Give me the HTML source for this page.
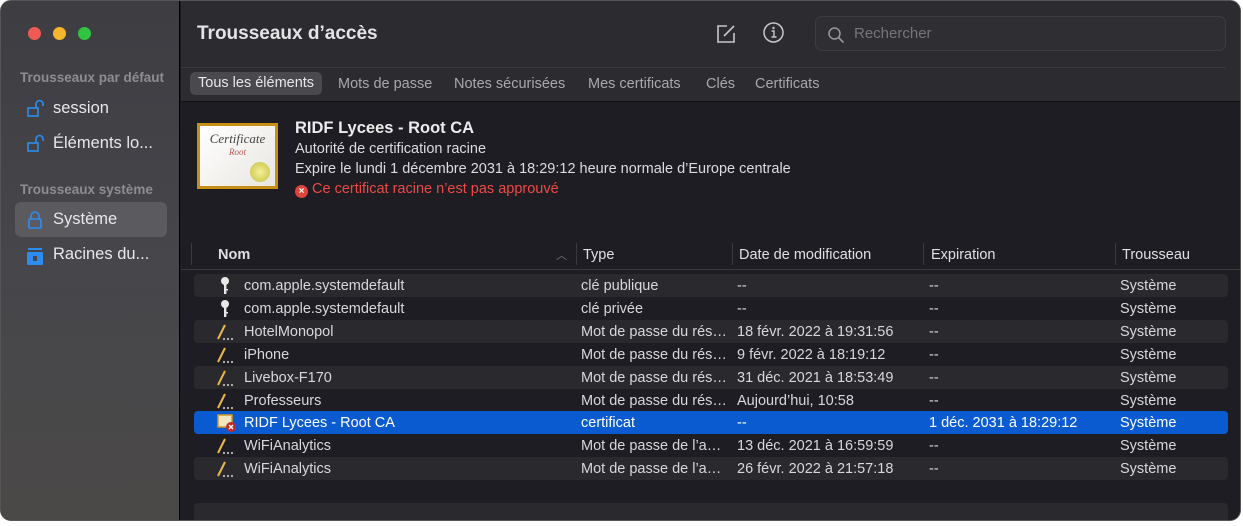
<!DOCTYPE html>
<html><head><meta charset="utf-8"><style>
*{margin:0;padding:0;box-sizing:border-box}
body{width:1243px;height:526px;background:#fff;font-family:"Liberation Sans",sans-serif;overflow:hidden;position:relative}
.win{position:absolute;left:0;top:0;width:1241px;height:521px;border-radius:11px;overflow:hidden;background:#1e1d23;border:1px solid #555}
.side{position:absolute;left:0;top:0;width:179px;height:100%;background:linear-gradient(180deg,#3d3d42 0%,#46464b 50%,#4b4948 100%);border-right:1px solid #000}
.dot{position:absolute;top:26px;width:13px;height:13px;border-radius:50%}
.sh{position:absolute;left:19px;font-size:13.5px;color:#8e8d92;font-weight:bold}
.si{position:absolute;left:52px;font-size:16.5px;color:#e8e8ea}
.sel{position:absolute;left:14px;top:201px;width:152px;height:35px;background:#5a5a5f;border-radius:6px}
.tb{position:absolute;left:180px;top:0;right:0;height:101px;background:#2c2b30;border-bottom:1px solid #111}
.title{position:absolute;left:16px;top:22px;font-size:19px;font-weight:bold;color:#e4e4e6}
.search{position:absolute;left:634px;top:15px;width:411px;height:35px;border:1px solid #3d3c42;border-radius:7px;background:#2f2e33}
.tabs{position:absolute;top:66px;height:1px;left:0;right:14px;background:#3a393e}
.tab{position:absolute;top:75px;font-size:14.5px;color:#a9a8ad}
.tab.on{background:#4a494e;color:#e8e8ea;padding:0 8px;height:23px;line-height:23px;border-radius:5px;top:71px;left:9px}
.t{position:absolute;color:#dcdce0;font-size:14.5px;white-space:nowrap}
.hdr{position:absolute;top:246px;font-size:14.5px;font-weight:bold;color:#e0e0e3}
.vs{position:absolute;top:242px;width:1px;height:22px;background:#3a393e}
.row{position:absolute;left:193px;width:1034px;height:23px;border-radius:4px}
.c{position:absolute;font-size:14.5px;color:#d8d8db;top:4px;white-space:nowrap}
</style></head><body>
<div class="win">
<div class="side">
<div class="dot" style="left:27px;background:#ee5b55"></div>
<div class="dot" style="left:52px;background:#f5b62d"></div>
<div class="dot" style="left:77px;background:#30c440"></div>
<div class="sh" style="top:69px">Trousseaux par défaut</div>
<svg style="position:absolute;left:25px;top:98px" width="20" height="20"><rect x="2" y="9" width="10" height="8" fill="none" stroke="#2d8cf0" stroke-width="1.6"/><path d="M10 9V5a3.5 3.5 0 0 1 7 0v2" fill="none" stroke="#2d8cf0" stroke-width="1.6"/></svg>
<div class="si" style="top:98px">session</div>
<svg style="position:absolute;left:25px;top:133px" width="20" height="20"><rect x="2" y="9" width="10" height="8" fill="none" stroke="#2d8cf0" stroke-width="1.6"/><path d="M10 9V5a3.5 3.5 0 0 1 7 0v2" fill="none" stroke="#2d8cf0" stroke-width="1.6"/></svg>
<div class="si" style="top:133px">Éléments lo...</div>
<div class="sh" style="top:181px">Trousseaux système</div>
<div class="sel"></div>
<svg style="position:absolute;left:26px;top:209px" width="16" height="20"><path d="M4 9V6a4 4 0 0 1 8 0v3" fill="none" stroke="#2d8cf0" stroke-width="1.6"/><rect x="2" y="9" width="12" height="9" rx="1" fill="none" stroke="#2d8cf0" stroke-width="1.6"/></svg>
<div class="si" style="top:209px">Système</div>
<svg style="position:absolute;left:25px;top:245px" width="18" height="20"><rect x="2" y="2" width="14" height="2" fill="#2d8cf0"/><rect x="1" y="6" width="16" height="13" rx="1" fill="#2d8cf0"/><rect x="7" y="10" width="4" height="5" fill="#46464b"/></svg>
<div class="si" style="top:244px">Racines du...</div>
</div>
<div class="tb">
<div class="title">Trousseaux d’accès</div>
<svg style="position:absolute;left:534px;top:21px" width="22" height="22"><path d="M12 4H3v16h16v-9" fill="none" stroke="#c8c8cc" stroke-width="1.6"/><path d="M9 14l10-10" stroke="#c8c8cc" stroke-width="1.6"/></svg>
<svg style="position:absolute;left:581px;top:20px" width="23" height="23"><circle cx="11.5" cy="11.5" r="9.5" fill="none" stroke="#c8c8cc" stroke-width="1.5"/><circle cx="11.5" cy="7" r="1.2" fill="#c8c8cc"/><path d="M9.5 10h2.5v6M9.5 16h5" stroke="#c8c8cc" stroke-width="1.4" fill="none"/></svg>
<div class="search"><svg style="position:absolute;left:11px;top:9px" width="18" height="18"><circle cx="7.5" cy="7.5" r="5.5" fill="none" stroke="#999" stroke-width="1.5"/><path d="M11.5 11.5l5 5" stroke="#999" stroke-width="1.6"/></svg><span style="position:absolute;left:38px;top:8px;font-size:15px;color:#76757a">Rechercher</span></div>
<div class="tabs"></div>
<div class="tab on">Tous les éléments</div>
<div class="tab" style="left:157px">Mots de passe</div>
<div class="tab" style="left:273px">Notes sécurisées</div>
<div class="tab" style="left:407px">Mes certificats</div>
<div class="tab" style="left:525px">Clés</div>
<div class="tab" style="left:574px">Certificats</div>
</div>
<div style="position:absolute;left:196px;top:122px;width:81px;height:66px;background:#c98e14;padding:3px"><div style="width:100%;height:100%;background:linear-gradient(135deg,#fff,#e8e6e0);position:relative;font-family:'Liberation Serif',serif;font-style:italic;color:#444;font-size:13px;text-align:center;padding-top:5px">Certificate<div style="color:#b55;font-size:9px">Root</div><div style="position:absolute;right:5px;bottom:4px;width:20px;height:20px;border-radius:50%;background:radial-gradient(#f3ef9a,#c7c040)"></div></div></div>
<div class="t" style="left:294px;top:118px;font-size:16.5px;font-weight:bold;color:#ececee">RIDF Lycees - Root CA</div>
<div class="t" style="left:294px;top:140px">Autorité de certification racine</div>
<div class="t" style="left:294px;top:160px">Expire le lundi 1 décembre 2031 à 18:29:12 heure normale d’Europe centrale</div>
<div class="t" style="left:294px;top:180px;color:#ee4a45"><span style="display:inline-block;width:13px;height:13px;border-radius:50%;background:#e0443e;color:#fff;font-size:10px;line-height:13px;text-align:center;vertical-align:-1px;font-weight:bold">×</span> Ce certificat racine n’est pas approuvé</div>
<div class="vs" style="left:190px"></div>
<div class="hdr" style="left:217px">Nom</div>
<div style="position:absolute;left:555px;top:246px;color:#777;font-size:11px">︿</div>
<div class="vs" style="left:575px"></div><div class="hdr" style="left:582px;font-weight:normal">Type</div>
<div class="vs" style="left:731px"></div><div class="hdr" style="left:738px;font-weight:normal">Date de modification</div>
<div class="vs" style="left:922px"></div><div class="hdr" style="left:930px;font-weight:normal">Expiration</div>
<div class="vs" style="left:1114px"></div><div class="hdr" style="left:1121px;font-weight:normal">Trousseau</div>
<div style="position:absolute;left:180px;right:0;top:268px;height:1px;background:#3a393e"></div>
<div id="rows"></div>
<div class="row" style="top:502px;height:20px;background:#2a292e"></div>
</div>
<script>
var R=[["k","com.apple.systemdefault","clé publique","--","--"],["k","com.apple.systemdefault","clé privée","--","--"],["p","HotelMonopol","Mot de passe du rés…","18 févr. 2022 à 19:31:56","--"],["p","iPhone","Mot de passe du rés…","9 févr. 2022 à 18:19:12","--"],["p","Livebox-F170","Mot de passe du rés…","31 déc. 2021 à 18:53:49","--"],["p","Professeurs","Mot de passe du rés…","Aujourd’hui, 10:58","--"],["c","RIDF Lycees - Root CA","certificat","--","1 déc. 2031 à 18:29:12"],["p","WiFiAnalytics","Mot de passe de l’a…","13 déc. 2021 à 16:59:59","--"],["p","WiFiAnalytics","Mot de passe de l’a…","26 févr. 2022 à 21:57:18","--"]];
var h="";R.forEach(function(r,i){var top=273+i*22.9;var bg=r[0]=="c"?"#0b5bd0":(i%2==0?"#2a292e":"transparent");var col=r[0]=="c"?"#fff":"#d8d8db";
var ic=r[0]=="k"?'<svg style="position:absolute;left:25px;top:2px" width="12" height="19"><circle cx="6" cy="5" r="4" fill="#e8e8e8"/><rect x="5" y="8" width="2.4" height="10" fill="#e8e8e8"/><rect x="6" y="13" width="3" height="1.5" fill="#e8e8e8"/></svg>':r[0]=="p"?'<svg style="position:absolute;left:22px;top:2px" width="20" height="20"><path d="M2 17L9 3" stroke="#e8b84a" stroke-width="2"/><circle cx="8" cy="17" r="1.1" fill="#bbb"/><circle cx="12" cy="17" r="1.1" fill="#bbb"/><circle cx="16" cy="17" r="1.1" fill="#bbb"/></svg>':'<svg style="position:absolute;left:23px;top:2px" width="22" height="20"><rect x="1" y="2" width="14" height="12" fill="#f2e6c0" stroke="#d49a20" stroke-width="1.5"/><circle cx="14" cy="14" r="5" fill="#c62828"/><path d="M12 12l4 4M16 12l-4 4" stroke="#fff" stroke-width="1.4"/></svg>';
h+='<div class="row" style="top:'+top+'px;background:'+bg+'">'+ic+'<div class="c" style="left:50px;color:'+col+'">'+r[1]+'</div><div class="c" style="left:387px;color:'+col+'">'+r[2]+'</div><div class="c" style="left:543px;color:'+col+'">'+r[3]+'</div><div class="c" style="left:735px;color:'+col+'">'+r[4]+'</div><div class="c" style="left:926px;color:'+col+'">Système</div></div>';});
document.getElementById("rows").innerHTML=h;
</script>
</body></html>
